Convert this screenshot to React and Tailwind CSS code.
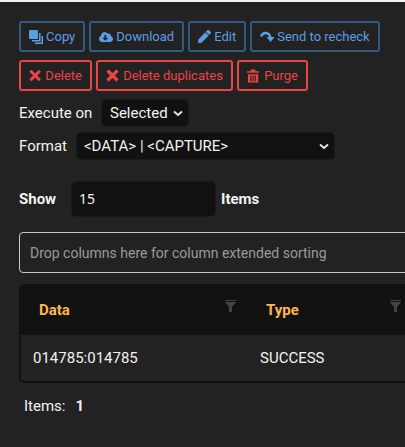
import React from 'react';
import { FaCloudDownloadAlt, FaPen } from 'react-icons/fa';

const CopyIcon = () => (
    <svg width="14" height="14" viewBox="0 0 14 14" fill="currentColor">
        <rect x="0" y="0" width="9" height="9" rx="1" />
        <path d="M10 3h1.500v8.500H3V10h7z" />
        <path d="M12.500 6H14v8H6v-1.500h6.500z" />
    </svg>
);

const RedoIcon = () => (
    <svg width="14" height="14" viewBox="0 0 14 14" fill="none">
        <path d="M1 6.500C3 1.500 9 2 10.500 7.500" stroke="currentColor" strokeWidth="2.400" />
        <path d="M6.500 7h8l-4 5z" fill="currentColor" />
    </svg>
);

const CrossIcon = () => (
    <svg width="13" height="13" viewBox="0 0 13 13" fill="none">
        <path d="M1.500 1.500l10 10M11.500 1.500l-10 10" stroke="currentColor" strokeWidth="3.200" />
    </svg>
);

const TrashIcon = () => (
    <svg width="13" height="14" viewBox="0 0 13 14" fill="currentColor">
        <path d="M4 0h5v2h4v1.500H0V2h4z" />
        <path d="M1 5h11v9H1zM3.500 6.500v6h1.200v-6zM5.900 6.500v6h1.200v-6zM8.300 6.500v6h1.200v-6z" fillRule="evenodd" />
    </svg>
);

const FilterIcon = ({ className }) => (
    <svg width="11" height="12" viewBox="0 0 11 12" fill="#444444" className={className}>
        <rect x="0" y="0" width="11" height="1" />
        <path d="M0 2h11L7 7v5H4V7z" />
    </svg>
);

const Chevron = () => (
    <svg width="10" height="7" viewBox="0 0 10 7" fill="none">
        <path d="M1 1.500l4 3.500 4-3.500" stroke="#e5e5e5" strokeWidth="2" />
    </svg>
);

const ActionButton = ({ icon, label, className }) => (
    <button className={`flex h-[31px] items-center justify-center rounded-[3px] border-2 bg-transparent px-2 text-[13px] ${className}`}>
        {icon}
        {label}
    </button>
);

const blue = 'gap-[3px] border-[#335a80] text-[#5b9ee6]';
const red = 'border-[#ea4444] text-[#ea4444]';

export default function App() {
    return (
        <div className="h-[447px] w-[405px] overflow-hidden border-t-2 border-[#f2f2f2] bg-[#222222] pl-[19px] pt-[19px] font-['Roboto',sans-serif] text-[15px] text-[#f2f2f2]">
            <div className="flex gap-1">
                <ActionButton className={blue} icon={<CopyIcon />} label="Copy" />
                <ActionButton className={blue} icon={<FaCloudDownloadAlt size={14} />} label="Download" />
                <ActionButton className={blue} icon={<FaPen size={13} />} label="Edit" />
                <ActionButton className={blue} icon={<RedoIcon />} label="Send to recheck" />
            </div>
            <div className="mt-2 flex gap-1">
                <ActionButton className={`${red} w-[73px] gap-1`} icon={<CrossIcon />} label="Delete" />
                <ActionButton className={`${red} w-[137px] gap-1`} icon={<CrossIcon />} label="Delete duplicates" />
                <ActionButton className={`${red} w-[71px] gap-[5px]`} icon={<TrashIcon />} label="Purge" />
            </div>

            <div className="mt-2 flex items-center">
                <span className="w-[82px]">Execute on</span>
                <div className="flex h-[28px] w-[88px] items-center justify-between rounded-[5px] border border-[#1a1a1a] bg-[#111111] pl-2 pr-[5px]">
                    Selected
                    <Chevron />
                </div>
            </div>
            <div className="mt-[5px] flex items-center">
                <span className="w-[57px]">Format</span>
                <div className="flex h-[28px] w-[259px] items-center justify-between rounded-[5px] border border-[#1a1a1a] bg-[#111111] pl-[7px] pr-[5px]">
                    {'<DATA> | <CAPTURE>'}
                    <Chevron />
                </div>
            </div>

            <div className="mt-[21px] flex items-center font-bold">
                <span className="w-[52px]">Show</span>
                <div className="flex h-[36px] w-[145px] items-center rounded-[5px] border border-[#1a1a1a] bg-[#111111] pl-[7px] font-['Noto_Sans',sans-serif] text-sm font-normal">
                    15
                </div>
                <span className="ml-[5px]">Items</span>
            </div>

            <div className="mt-[15px] flex h-[41px] w-[420px] items-center rounded-[4px] border border-[#c8c8c8] pl-[10px] text-sm text-[#9a9a9a]">
                Drop columns here for column extended sorting
            </div>

            <div className="mt-[11px] w-[420px] rounded-[5px] border-b-[2px] border-l-[2px] border-[#111111] bg-[#222222]">
                <div className="flex h-[51px] rounded-t-[5px] bg-[#111111] font-bold text-[#ffb74d]">
                    <div className="relative w-[227px] pl-[18px] pt-[15px]">
                        Data
                        <FilterIcon className="absolute left-[204px] top-[16px]" />
                    </div>
                    <div className="relative flex-1 pl-[18px] pt-[15px]">
                        Type
                        <FilterIcon className="absolute left-[142px] top-[16px]" />
                    </div>
                </div>
                <div className="flex h-[46px] items-center">
                    <div className="w-[239px] pl-[12px]">014785:014785</div>
                    <div>SUCCESS</div>
                </div>
            </div>

            <div className="ml-[5px] mt-[12px] flex gap-[10px]">
                <span>Items:</span>
                <span className="font-bold">1</span>
            </div>
        </div>
    );
}
